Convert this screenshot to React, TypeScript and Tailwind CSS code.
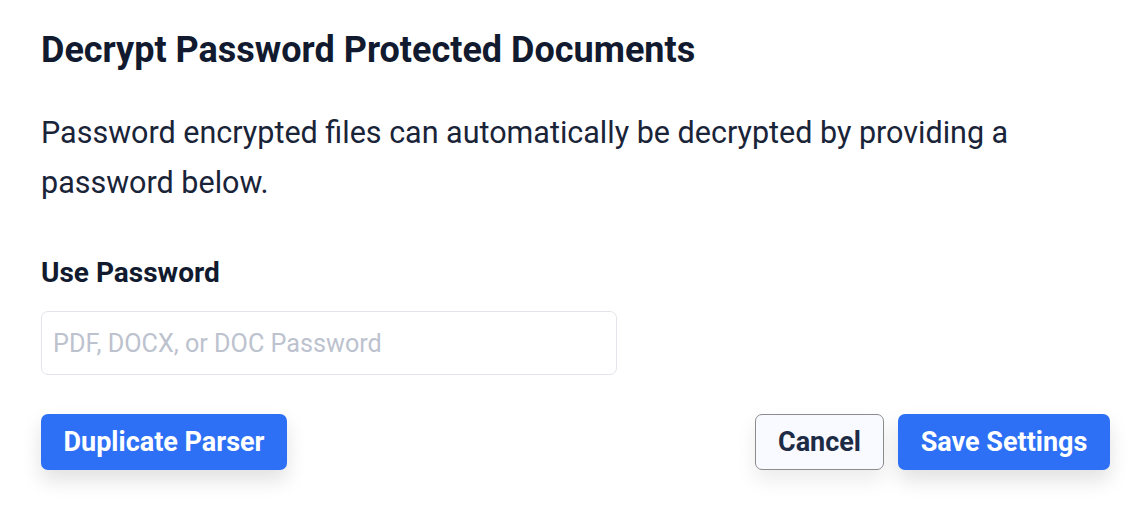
export default function App() {
  return (
    <div className="w-[1144px] h-[516px] bg-white pl-[41px] pr-[34px] pt-[28px] text-[#111a2e]" style={{ fontFamily: "Roboto, 'Noto Sans', sans-serif" }}>
      <h1 className="text-[36px] leading-[44px] font-bold">Decrypt Password Protected Documents</h1>
      <p className="mt-[36px] text-[30.5px] leading-[50px] text-[#1a2438] max-w-[1040px]">
        Password encrypted files can automatically be decrypted by providing a password below.
      </p>
      <div className="mt-[47px] text-[28px] leading-[36px] font-bold">Use Password</div>
      <input
        className="block mt-[20px] w-[576px] h-[64px] rounded-[7px] border border-[#e3e5ec] px-[11px] text-[25.2px] outline-none placeholder:text-[#bcc2ce]"
        placeholder="PDF, DOCX, or DOC Password"
      />
      <div className="mt-[39px] flex items-center">
        <button className="h-[56px] w-[246px] rounded-[7px] bg-[#2d70f5] text-white text-[27px] font-bold shadow-[0_10px_20px_rgba(0,0,0,0.12)]">
          Duplicate Parser
        </button>
        <div className="ml-auto flex gap-[14px]">
          <button className="h-[56px] w-[129px] rounded-[7px] bg-[#f8faff] border border-[#8c8c8c] text-[#1e2b45] text-[27px] font-bold shadow-[0_10px_20px_rgba(0,0,0,0.08)]">
            Cancel
          </button>
          <button className="h-[56px] w-[212px] rounded-[7px] bg-[#2d70f5] text-white text-[27px] font-bold shadow-[0_10px_20px_rgba(0,0,0,0.12)]">
            Save Settings
          </button>
        </div>
      </div>
    </div>
  );
}
